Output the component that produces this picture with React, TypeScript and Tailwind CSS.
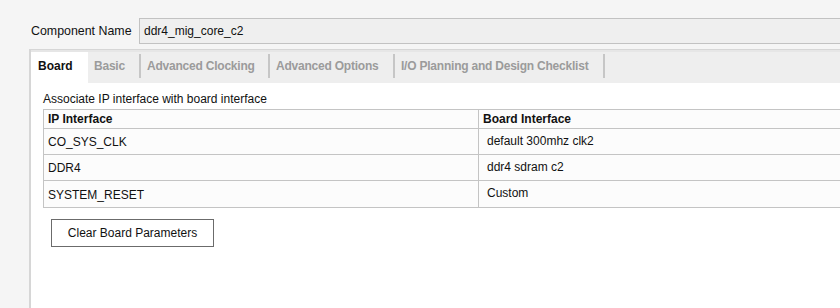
import React from 'react'

const rows = [
    { ip: 'CO_SYS_CLK', board: 'default 300mhz clk2' },
    { ip: 'DDR4', board: 'ddr4 sdram c2' },
    { ip: 'SYSTEM_RESET', board: 'Custom' },
]

const tabs = [
    { label: 'Basic', w: 'w-[51px]' },
    { label: 'Advanced Clocking', w: 'w-[127px]' },
    { label: 'Advanced Options', w: 'w-[123px]' },
    { label: 'I/O Planning and Design Checklist', w: 'w-[208px]' },
]

export default function App(): JSX.Element {
    return (
        <div className="w-[840px] h-[308px] overflow-hidden bg-[#f5f5f5] text-[12px] text-[#111] flex flex-col font-['Liberation_Sans',Arial,sans-serif]">
            {/* Component name row */}
            <div className="flex items-center mt-[18px] h-[26px]">
                <span className="w-[139px] pl-[31px] shrink-0 text-[12.4px]">Component Name</span>
                <div className="flex-1 h-full flex items-center pl-[4px] bg-[#efefef] border border-r-0 border-[#c2c2c2]">
                    ddr4_mig_core_c2
                </div>
            </div>

            {/* Tab panel */}
            <div className="flex-1 mt-[5px] ml-[29px] border-l-2 border-t border-[#d6d6d6] bg-white flex flex-col">
                <div className="h-[33px] bg-[#eeeeee] border-t-2 border-[#e6e6e6] flex items-stretch">
                    <div className="w-[57px] bg-white flex items-center pl-[7px] pb-[3px] font-bold">Board</div>
                    {tabs.map((t) => (
                        <div key={t.label} className="flex items-stretch">
                            <div className={`${t.w} flex items-center pl-[6px] pb-[3px] font-bold tracking-[-0.22px] text-[#9b9b9b] whitespace-nowrap`}>{t.label}</div>
                            <div className="w-[2px] mt-[2px] mb-[5px] bg-[#c6c6c6]" />
                        </div>
                    ))}
                </div>

                <div className="flex flex-col pl-[12px] pt-[8px]">
                    <div className="leading-[16px] h-[18px]">Associate IP interface with board interface</div>
                    <div className="border-t border-l border-b border-[#c4c4c4] bg-[#fcfcfc]">
                        <div className="flex h-[19px] border-b border-[#c4c4c4] font-bold">
                            <div className="w-[435px] pl-[4px] border-r border-[#c4c4c4] flex items-center">IP Interface</div>
                            <div className="flex-1 pl-[4px] flex items-center">Board Interface</div>
                        </div>
                        {rows.map((r, i) => (
                            <div key={r.ip} className={`flex h-[26px] ${i < rows.length - 1 ? 'border-b border-[#c4c4c4]' : ''}`}>
                                <div className="w-[435px] pl-[4px] border-r border-[#c4c4c4] flex items-center pt-[1px]">{r.ip}</div>
                                <div className="flex-1 pl-[8px] flex items-center pb-[2px]">{r.board}</div>
                            </div>
                        ))}
                    </div>
                    <div className="pt-[11px] pl-[8px]">
                        <button className="w-[163px] h-[28px] border border-[#6b6b6b] bg-white text-[12px] text-[#111]">
                            Clear Board Parameters
                        </button>
                    </div>
                </div>
            </div>
        </div>
    )
}
